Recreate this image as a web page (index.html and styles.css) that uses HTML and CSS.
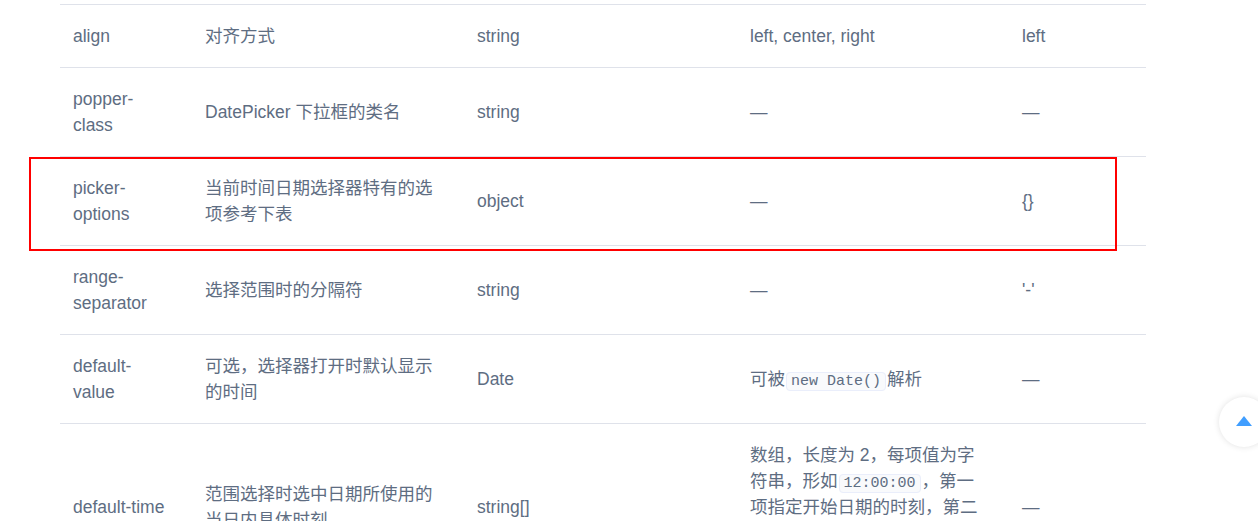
FILE: index.html
```html
<!DOCTYPE html>
<html lang="zh-CN">
<head>
<meta charset="utf-8">
<title>DatePicker Attributes</title>
<link rel="stylesheet" href="styles.css">
</head>
<body>
<div class="page">
  <table class="attr-table">
    <colgroup>
      <col class="c-name">
      <col class="c-desc">
      <col class="c-type">
      <col class="c-opts">
      <col class="c-def">
    </colgroup>
    <tbody>
      <tr><td>align</td><td>对齐方式</td><td>string</td><td>left, center, right</td><td>left</td></tr>
      <tr><td>popper-class</td><td>DatePicker 下拉框的类名</td><td>string</td><td>—</td><td>—</td></tr>
      <tr><td>picker-options</td><td>当前时间日期选择器特有的选项参考下表</td><td>object</td><td>—</td><td>{}</td></tr>
      <tr><td>range-separator</td><td>选择范围时的分隔符</td><td>string</td><td>—</td><td>'-'</td></tr>
      <tr><td>default-value</td><td>可选，选择器打开时默认显示的时间</td><td>Date</td><td>可被<code>new Date()</code>解析</td><td>—</td></tr>
      <tr><td>default-time</td><td>范围选择时选中日期所使用的当日内具体时刻</td><td>string[]</td><td>数组，长度为 2，每项值为字符串，形如<code>12:00:00</code>，第一项指定开始日期的时刻，第二项指定结束日期的时刻，不指定会使用时刻 <code>00:00:00</code></td><td>—</td></tr>
    </tbody>
  </table>
  <div class="highlight"></div>
</div>
<div class="back-top"><span class="arrow"></span></div>
</body>
</html>
```

FILE: styles.css
```css
html, body {
  margin: 0;
  padding: 0;
  background: #fff;
  overflow: hidden;
}
body {
  font-family: "Liberation Sans", Arial, "Noto Sans CJK SC", sans-serif;
  color: #5e6d82;
}
.page {
  position: relative;
  width: 1086px;
  margin-left: 60px;
  padding-top: 4px;
}
.attr-table {
  width: 1086px;
  table-layout: fixed;
  border-collapse: collapse;
  font-size: 17.5px;
  line-height: 26px;
}
.c-name { width: 126px; }
.c-desc { width: 272px; }
.c-type { width: 273px; }
.c-opts { width: 272px; }
.c-def { width: 143px; }
.attr-table tr {
  border-top: 1px solid #dfe2ea;
}
.attr-table td {
  padding: 18px 18px 18px 19px;
  border-bottom: 1px solid #dfe2ea;
  vertical-align: middle;
  word-wrap: break-word;
}
.attr-table td:first-child {
  padding-left: 13px;
  padding-right: 14px;
}
code {
  font-family: "Liberation Mono", "Courier New", monospace;
  font-size: 15px;
  line-height: 18px;
  color: #5e6d82;
  background: #f9fafc;
  border: 1px solid #eaeefb;
  border-radius: 4px;
  padding: 0 4px;
  margin: 0 1px;
}
.highlight {
  position: absolute;
  left: -31px;
  top: 157px;
  width: 1084px;
  height: 90px;
  border: 2px solid #f00;
}
.back-top {
  position: absolute;
  left: 1219px;
  top: 397px;
  width: 50px;
  height: 50px;
  border-radius: 50%;
  background: #fff;
  box-shadow: 0 0 6px rgba(0, 0, 0, 0.12);
  display: flex;
  align-items: center;
  justify-content: center;
}
.arrow {
  width: 0;
  height: 0;
  border-left: 8px solid transparent;
  border-right: 8px solid transparent;
  border-bottom: 10px solid #409eff;
  margin-bottom: 2px;
}
```
